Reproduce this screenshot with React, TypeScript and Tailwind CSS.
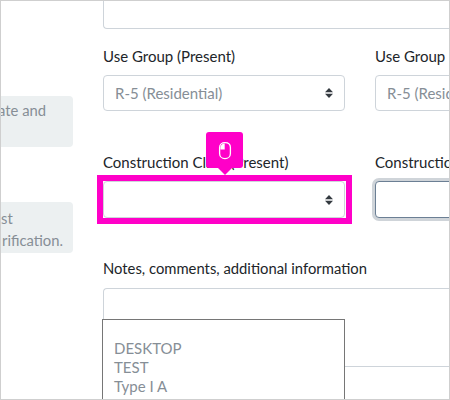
import React from 'react';

const UpDownArrows = () => (
  <svg width="8" height="10" viewBox="0 0 8 10" className="absolute right-[11px] top-1/2 -translate-y-1/2">
    <path d="M4 0 L8 4.3 L0 4.3 Z M4 10 L8 5.7 L0 5.7 Z" fill="#343a40" />
  </svg>
);

const MouseIcon = () => (
  <svg width="14" height="19" viewBox="0 0 14 19" fill="none">
    <path d="M7 1.6 H6.8 C4 1.6 1.6 3.4 1.6 6.5 V12.4 C1.6 15.4 3.9 17.6 7 17.6 C10.1 17.6 12.4 15.4 12.4 12.4 V6.5 C12.4 3.4 10 1.6 7 1.6 Z" stroke="#fff" strokeWidth="1.3" />
    <path d="M6.7 2.4 V8.6 H2.4 V6.5 C2.4 4 4.2 2.6 6.7 2.4 Z" fill="#fff" />
  </svg>
);

const SelectBox: React.FC<{ value?: string; className?: string }> = ({ value, className }) => (
  <div className={`relative flex w-[242px] items-center rounded-[4px] border bg-white pl-[11px] text-[#868e96] ${className ?? 'h-[36px] border-[#ced4da]'}`}>
    <span className="whitespace-nowrap">{value}</span>
    <UpDownArrows />
  </div>
);

export default function App() {
  return (
    <div className="relative flex h-[400px] w-[450px] overflow-hidden border border-[#cfcfcf] bg-white font-['Lato','Liberation_Sans',sans-serif] text-[15px] text-[#212529]">
      {/* left hints, cut off by the crop */}
      <div className="w-[72px] shrink-0 pt-[95px] text-[14.8px]">
        <div className="h-[51px] rounded-r-[4px] bg-[#ecf0f1] pt-[3px] leading-[22px] text-[#868e96] whitespace-nowrap">
          <p className="-ml-[3px]">ate and</p>
        </div>
        <div className="mt-[55px] h-[51px] rounded-r-[4px] bg-[#ecf0f1] pt-[5px] leading-[22px] text-[#868e96] whitespace-nowrap">
          <p>st</p>
          <p className="pl-[1px]">rification.</p>
        </div>
      </div>

      <div className="shrink-0 pl-[30px]">
        <div className="h-[28px] w-[400px] rounded-bl-[4px] border-b border-l border-[#ced4da]" />

        <div className="mt-[17px] grid grid-cols-[242px_242px] gap-x-[30px]">
          <div>
            <p className="mb-[8px] h-[21px] leading-[21px]">Use Group (Present)</p>
            <SelectBox value="R-5 (Residential)" />
          </div>
          <div>
            <p className="mb-[8px] h-[21px] leading-[21px]">Use Group (Proposed)</p>
            <SelectBox value="R-5 (Residential)" />
          </div>

          <div className="relative mt-[41px]">
            <p className="mb-[8px] h-[21px] leading-[21px]">Construction Class (Present)</p>
            <SelectBox className="h-[37px] border-[#ced4da]" />
            <div className="pointer-events-none absolute -left-[6px] -right-[7px] -bottom-[6px] h-[49px] border-[6px] border-[#ff00c8]" />
            <div className="absolute left-[103px] top-[-20px] flex h-[36px] w-[37px] items-center justify-center rounded-[3px] bg-[#ff00c8]">
              <MouseIcon />
              <div className="absolute -bottom-[7px] left-1/2 h-0 w-0 -translate-x-1/2 border-x-[7px] border-t-[7px] border-x-transparent border-t-[#ff00c8]" />
            </div>
          </div>
          <div className="mt-[41px]">
            <p className="mb-[8px] h-[21px] leading-[21px]">Construction Class (Proposed)</p>
            <SelectBox className="h-[37px] border-[#6b7f94] shadow-[0_0_0_3px_#cfd4d9]" />
          </div>
        </div>

        <div className="relative mt-[40px]">
          <p className="mb-[9px] h-[21px] text-[14.8px] leading-[21px]">Notes, comments, additional information</p>
          <div className="h-[79px] w-[400px] rounded-l-[4px] border border-r-0 border-[#ced4da]" />
          {/* open native dropdown list */}
          <div className="absolute left-[-1px] top-[61px] h-[90px] w-[243px] border border-[#767676] bg-white pl-[11px] leading-[19px] text-[#868e96]">
            <p className="h-[19px]" />
            <p>DESKTOP</p>
            <p>TEST</p>
            <p>Type I A</p>
          </div>
        </div>
      </div>
    </div>
  );
}
